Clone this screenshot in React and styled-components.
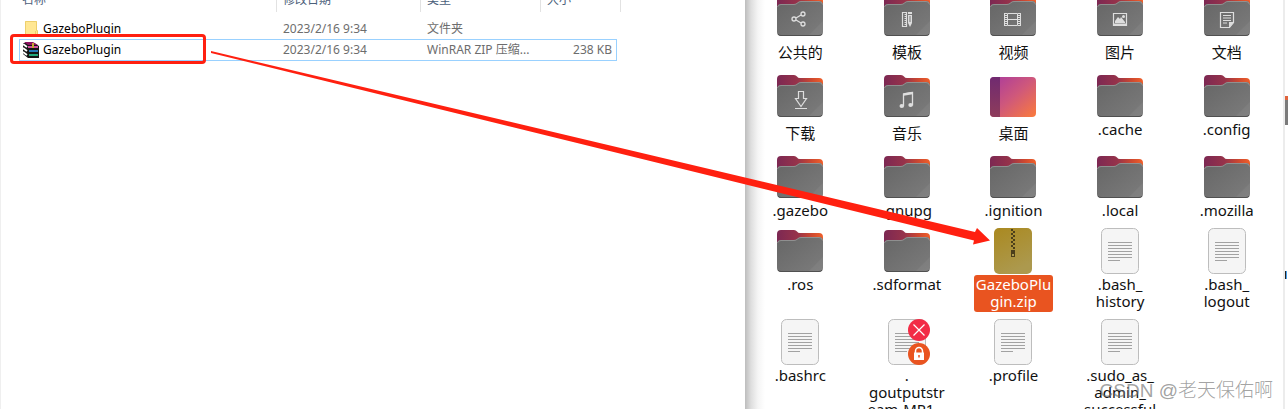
import React from 'react';
import styled, { createGlobalStyle } from 'styled-components';

const GlobalStyle = createGlobalStyle`
  body {
    margin: 0;
    background: #fff;
    font-family: 'Noto Sans', 'Noto Sans CJK SC', sans-serif;
  }
`;

const Page = styled.div`
  position: relative;
  display: grid;
  grid-template-columns: 745fr 538fr 5px;
  height: 100vh;
  overflow: hidden;
`;

const Explorer = styled.section`
  padding-left: 18px;
  border-left: 1px solid #efefef;
`;

const FileTable = styled.table`
  width: 602px;
  margin-top: -13px;
  table-layout: fixed;
  border-collapse: separate;
  border-spacing: 0;
  font-size: 12px;
  line-height: 16px;
`;

const Col = styled.col`
  width: ${(props) => props.$width}px;
`;

const HeadCell = styled.th`
  box-sizing: border-box;
  height: 25px;
  padding: 0 6px 0 ${(props) => (props.$first ? 3 : 6)}px;
  border-right: 1px solid #e2e2e2;
  color: #4c607a;
  font-weight: 400;
  text-align: left;
`;

const FileRows = styled.tbody`
  &::before {
    content: '';
    display: block;
    height: 6px;
  }
`;

const FileRow = styled.tr`
  td {
    box-sizing: border-box;
    height: ${(props) => (props.$selected ? 22 : 21)}px;
    padding: 0 4px 0 6px;
    border: 0 solid #99d1ff;
    border-width: ${(props) => (props.$selected ? '1px 0' : '0')};
    color: #6d6d6d;
    white-space: nowrap;
  }

  td:first-child {
    padding-left: ${(props) => (props.$selected ? 3 : 4)}px;
    border-left-width: ${(props) => (props.$selected ? '1px' : '0')};
    color: #000;
  }

  td:last-child {
    border-right-width: ${(props) => (props.$selected ? '1px' : '0')};
    text-align: right;
  }
`;

const FileName = styled.span`
  display: flex;
  align-items: center;
  gap: 4px;
`;

const Files = styled.section`
  box-sizing: border-box;
  padding: 0 3px 0 2px;
  background: linear-gradient(to right, #bdbdbd, #dedede 6px, #f5f5f5 13px, #fff 20px);
`;

const IconGrid = styled.ul`
  display: grid;
  grid-template-columns: repeat(5, 1fr);
  row-gap: 6px;
  margin: -9px 0 0;
  padding: 0;
  list-style: none;
`;

const Item = styled.li`
  display: flex;
  flex-direction: column;
  align-items: center;
`;

const IconBox = styled.div`
  position: relative;
  height: 48px;

  svg {
    display: block;
  }
`;

const Label = styled.span`
  padding: 1px 2px 2px;
  border-radius: 3px;
  background: ${(props) => (props.$selected ? '#e95420' : 'transparent')};
  color: ${(props) => (props.$selected ? '#fff' : '#111')};
  font-size: 15px;
  line-height: ${(props) => (props.$tall ? 24 : 17)}px;
  text-align: center;
  white-space: pre-line;
`;

const Emblems = styled.div`
  position: absolute;
  top: 1px;
  right: 1px;
`;

const Edge = styled.aside`
  display: flex;
  flex-direction: column;
  overflow: hidden;
  border-left: 2px solid #ececec;
`;

const EdgeFolder = styled.div`
  height: 25px;
  margin-top: 96px;
  border-top: 4px solid #e0643c;
  background: #7b7b7b;
`;

const EdgeMark = styled.div`
  width: 1px;
  height: 8px;
  margin-top: 146px;
  border-right: 1px solid #4aa3f0;
  background: #222;
`;

const Highlight = styled.div`
  position: absolute;
  top: 34px;
  left: 10px;
  box-sizing: border-box;
  width: 196px;
  height: 30px;
  border: 3px solid #ff2010;
  border-radius: 4px;
`;

const Arrow = styled.svg`
  position: absolute;
  top: 50px;
  left: 210px;
`;

const Watermark = styled.div`
  position: absolute;
  right: 15px;
  bottom: 4px;
  color: rgba(110, 110, 110, 0.65);
  font-family: 'Liberation Sans', 'Noto Sans CJK SC', sans-serif;
  font-size: 19px;
  font-weight: 300;
  line-height: 28px;
`;

const glyphs = {
  share: (
    <g fill="none" stroke="#dedede" strokeWidth="1.3">
      <circle cx="18" cy="28" r="2" />
      <circle cx="27" cy="23" r="2" />
      <circle cx="27" cy="33" r="2" />
      <path d="M20 27l5-3M20 29l5 3" />
    </g>
  ),
  template: (
    <g fill="none" stroke="#dedede">
      <path d="M19.5 21.5h4v14h-4z" strokeWidth="1.2" />
      <path d="M21.5 23.5h2M21.5 25.5h2M21.5 27.5h2M21.5 29.5h2M21.5 31.5h2M21.5 33.5h2" />
      <path d="M25 21h4v11l-2 4-2-4z" fill="#dedede" stroke="none" />
      <path d="M27 25v6M25 23.5h4" stroke="#777" />
    </g>
  ),
  video: (
    <g fill="none" stroke="#dedede">
      <path d="M18.5 22.5h10v12h-10zM18.5 28.5h10M15.5 22v13M31.5 22v13" />
      <path d="M17 22v13M30 22v13" strokeWidth="2" strokeDasharray="1 1" />
    </g>
  ),
  picture: (
    <g fill="none" stroke="#dedede">
      <path d="M17.5 22.5h13v12h-13z" strokeWidth="1.2" />
      <path d="M19 32v-2l3-4 2 2 1-2 4 5v1z" fill="#dedede" stroke="none" />
      <path d="M17 33.5h14" strokeWidth="2" />
      <circle cx="27.5" cy="25.5" r="1.5" fill="#dedede" stroke="none" />
    </g>
  ),
  document: (
    <g fill="none" stroke="#dedede" strokeWidth="1.2">
      <path d="M17.5 21.5h13v10l-4 5h-9zM20 24.5h8M20 27h8M20 29.5h8M20 32h4" />
      <path d="M26 31h5l-5 6z" fill="#dedede" stroke="none" />
    </g>
  ),
  download: (
    <g fill="none" stroke="#dedede" strokeWidth="1.2">
      <path d="M22.5 19.5h5v7h3l-5.500 8-5.500-8h3zM19 36.5h12" />
    </g>
  ),
  music: (
    <g fill="none" stroke="#dedede" strokeWidth="1.3">
      <path d="M20.5 34V22l9-1.500v13" />
      <path d="M20.5 22.5l9-1.500" strokeWidth="2.5" />
      <ellipse cx="18.8" cy="34" rx="2.3" ry="2" fill="#dedede" stroke="none" />
      <ellipse cx="27.6" cy="33" rx="2.3" ry="2" fill="#dedede" stroke="none" />
    </g>
  ),
};

function FolderIcon({ glyph }) {
  return (
    <svg width="48" height="48" viewBox="0 0 48 48" aria-hidden="true">
      <defs>
        <linearGradient id="folder-back" x1="0" x2="1" y1="0" y2="0">
          <stop offset="0" stopColor="#7c2853" />
          <stop offset="0.45" stopColor="#97334a" />
          <stop offset="0.75" stopColor="#cd4830" />
          <stop offset="1" stopColor="#f0602a" />
        </linearGradient>
        <linearGradient id="folder-front" x1="0" x2="1" y1="0" y2="1">
          <stop offset="0" stopColor="#666" />
          <stop offset="1" stopColor="#7c7c7c" />
        </linearGradient>
      </defs>
      <path d="M1 7q0-4 4-4h13q2 0 3 1.500t3 1.500h19q4 0 4 4v12H1z" fill="url(#folder-back)" />
      <path d="M1 17q0-4 4-4h13q2 0 3.500-1.500t3.500-1.500h18q4 0 4 4v27q0 4-4 4H5q-4 0-4-4z" fill="url(#folder-front)" />
      <path d="M1.500 16q.5-2.500 3.500-2.500h13q2 0 3.500-1.500t3.500-1.500h18q3 0 3.500 3" fill="none" stroke="#999" strokeWidth="0.8" />
      <path d="M47 30v11q0 4-4 4H32z" fill="#fff" opacity="0.05" />
      <path d="M2 43q1 1.500 3 1.500h38q2 0 3-1.500" fill="none" stroke="#505050" />
      {glyphs[glyph]}
    </svg>
  );
}

function DesktopIcon() {
  return (
    <svg width="48" height="48" viewBox="0 0 48 48" aria-hidden="true">
      <defs>
        <linearGradient id="desktop" x1="0" x2="1" y1="0" y2="1">
          <stop offset="0" stopColor="#a8399f" />
          <stop offset="0.5" stopColor="#cf587b" />
          <stop offset="1" stopColor="#fb7b3c" />
        </linearGradient>
        <linearGradient id="dock" x1="0" x2="0" y1="0" y2="1">
          <stop offset="0" stopColor="#702a70" />
          <stop offset="1" stopColor="#8e3c5b" />
        </linearGradient>
      </defs>
      <rect x="1" y="5" width="46" height="40" rx="4" fill="url(#desktop)" />
      <path d="M11 5H5q-4 0-4 4v32q0 4 4 4h6z" fill="url(#dock)" />
    </svg>
  );
}

function TextIcon() {
  return (
    <svg width="48" height="48" viewBox="0 0 48 48" aria-hidden="true">
      <rect x="5.5" y="1.5" width="37" height="45" rx="5" fill="#f5f5f5" stroke="#bdbdbd" />
      <path d="M12 15.5h24M12 18.5h24M12 21.5h24M12 24.5h24M12 27.5h24M12 30.5h24M12 33.5h12" stroke="#a2a2a2" />
    </svg>
  );
}

function ZipIcon() {
  return (
    <svg width="48" height="48" viewBox="0 0 48 48" aria-hidden="true">
      <defs>
        <linearGradient id="zip" x1="0" x2="0.4" y1="0" y2="1">
          <stop offset="0" stopColor="#aa8920" />
          <stop offset="1" stopColor="#ac994e" />
        </linearGradient>
      </defs>
      <rect x="5" y="1" width="38" height="46" rx="5" fill="url(#zip)" />
      <path d="M23 2v20" stroke="#4b3f1b" strokeWidth="2" strokeDasharray="2 2" />
      <path d="M25 4v18" stroke="#4b3f1b" strokeWidth="2" strokeDasharray="2 2" />
      <path d="M22 23h4v7h-4z" fill="#4b3f1b" />
      <path d="M23 27h2v2h-2z" fill="#ac994e" />
    </svg>
  );
}

function LockedEmblems() {
  return (
    <Emblems>
      <svg width="22" height="46" viewBox="0 0 22 46" aria-hidden="true">
        <circle cx="11" cy="11" r="11" fill="#f22c46" />
        <path d="M5.5 5.5l11 11M16.5 5.5l-11 11" stroke="#fff" strokeWidth="1.2" />
        <circle cx="11" cy="35" r="11" fill="#e95420" />
        <path d="M7.5 34v-2a3.500 3.500 0 0 1 7 0v2" fill="none" stroke="#fff" strokeWidth="1.5" />
        <path d="M6 33.5h10v7.500H6z" fill="#fff" />
        <path d="M11 36v2.500" stroke="#e95420" strokeWidth="1.5" />
      </svg>
    </Emblems>
  );
}

function YellowFolder() {
  return (
    <svg width="16" height="16" viewBox="0 0 16 16" aria-hidden="true">
      <path d="M2 0h12v15H2z" fill="#ffe793" />
      <path d="M2.5 0.5h11v9h1v6h-12z" fill="none" stroke="#edcf6c" />
      <path d="M12.5 10v5" stroke="#edcf6c" />
    </svg>
  );
}

function ArchiveIcon() {
  return (
    <svg width="16" height="16" viewBox="0 0 16 16" aria-hidden="true">
      <path d="M0 1h11l5 3v12H5l-5-4z" fill="#151515" />
      <path d="M1 0h9l5 3H5z" fill="#8d1160" />
      <path d="M5 4h10v2H5z" fill="#d04f9f" />
      <path d="M6 8h9v2H6z" fill="#2479b8" />
      <path d="M6 12h9v2H6z" fill="#22a77a" />
      <path d="M0 2l4 3M0 6l4 3M0 10l4 3" stroke="#fff" strokeWidth="1.8" />
      <path d="M9 1h2v5H9z" fill="#c8a531" />
    </svg>
  );
}

const icons = {
  folder: FolderIcon,
  desktop: DesktopIcon,
  text: TextIcon,
  zip: ZipIcon,
};

const items = [
  { name: '公共的', glyph: 'share', tall: true },
  { name: '模板', glyph: 'template', tall: true },
  { name: '视频', glyph: 'video', tall: true },
  { name: '图片', glyph: 'picture', tall: true },
  { name: '文档', glyph: 'document', tall: true },
  { name: '下载', glyph: 'download', tall: true },
  { name: '音乐', glyph: 'music', tall: true },
  { name: '桌面', icon: 'desktop', tall: true },
  { name: '.cache' },
  { name: '.config' },
  { name: '.gazebo' },
  { name: '.gnupg' },
  { name: '.ignition' },
  { name: '.local' },
  { name: '.mozilla' },
  { name: '.ros' },
  { name: '.sdformat' },
  { name: 'GazeboPlu\ngin.zip', icon: 'zip', selected: true },
  { name: '.bash_\nhistory', icon: 'text' },
  { name: '.bash_\nlogout', icon: 'text' },
  { name: '.bashrc', icon: 'text' },
  { name: '.\ngoutputstr\neam-MP1…', icon: 'text', locked: true },
  { name: '.profile', icon: 'text' },
  { name: '.sudo_as_\nadmin_\nsuccessful', icon: 'text' },
];

function App() {
  return (
    <Page>
      <GlobalStyle />
      <Explorer>
        <FileTable>
          <colgroup>
            <Col $width={258} />
            <Col $width={144} />
            <Col $width={120} />
            <Col $width={76} />
            <Col $width={4} />
          </colgroup>
          <thead>
            <tr>
              <HeadCell $first>名称</HeadCell>
              <HeadCell>修改日期</HeadCell>
              <HeadCell>类型</HeadCell>
              <HeadCell colSpan={2}>大小</HeadCell>
            </tr>
          </thead>
          <FileRows>
            <FileRow>
              <td><FileName><YellowFolder />GazeboPlugin</FileName></td>
              <td>2023/2/16 9:34</td>
              <td>文件夹</td>
              <td />
            </FileRow>
            <FileRow $selected>
              <td><FileName><ArchiveIcon />GazeboPlugin</FileName></td>
              <td>2023/2/16 9:34</td>
              <td>WinRAR ZIP 压缩...</td>
              <td>238 KB</td>
            </FileRow>
          </FileRows>
        </FileTable>
      </Explorer>
      <Files>
        <IconGrid>
          {items.map((item) => {
            const Icon = icons[item.icon || 'folder'];
            return (
              <Item key={item.name}>
                <IconBox>
                  <Icon glyph={item.glyph} />
                  {item.locked && <LockedEmblems />}
                </IconBox>
                <Label $tall={item.tall} $selected={item.selected}>{item.name}</Label>
              </Item>
            );
          })}
        </IconGrid>
      </Files>
      <Edge>
        <EdgeFolder />
        <EdgeMark />
      </Edge>
      <Highlight />
      <Arrow width="782" height="196" viewBox="210 50 782 196" aria-hidden="true">
        <path d="M211 51L975 232l2-4 13 12.500-17 4 1-4L211 53z" fill="#ff2010" />
      </Arrow>
      <Watermark>CSDN @老天保佑啊</Watermark>
    </Page>
  );
}

export default App;
